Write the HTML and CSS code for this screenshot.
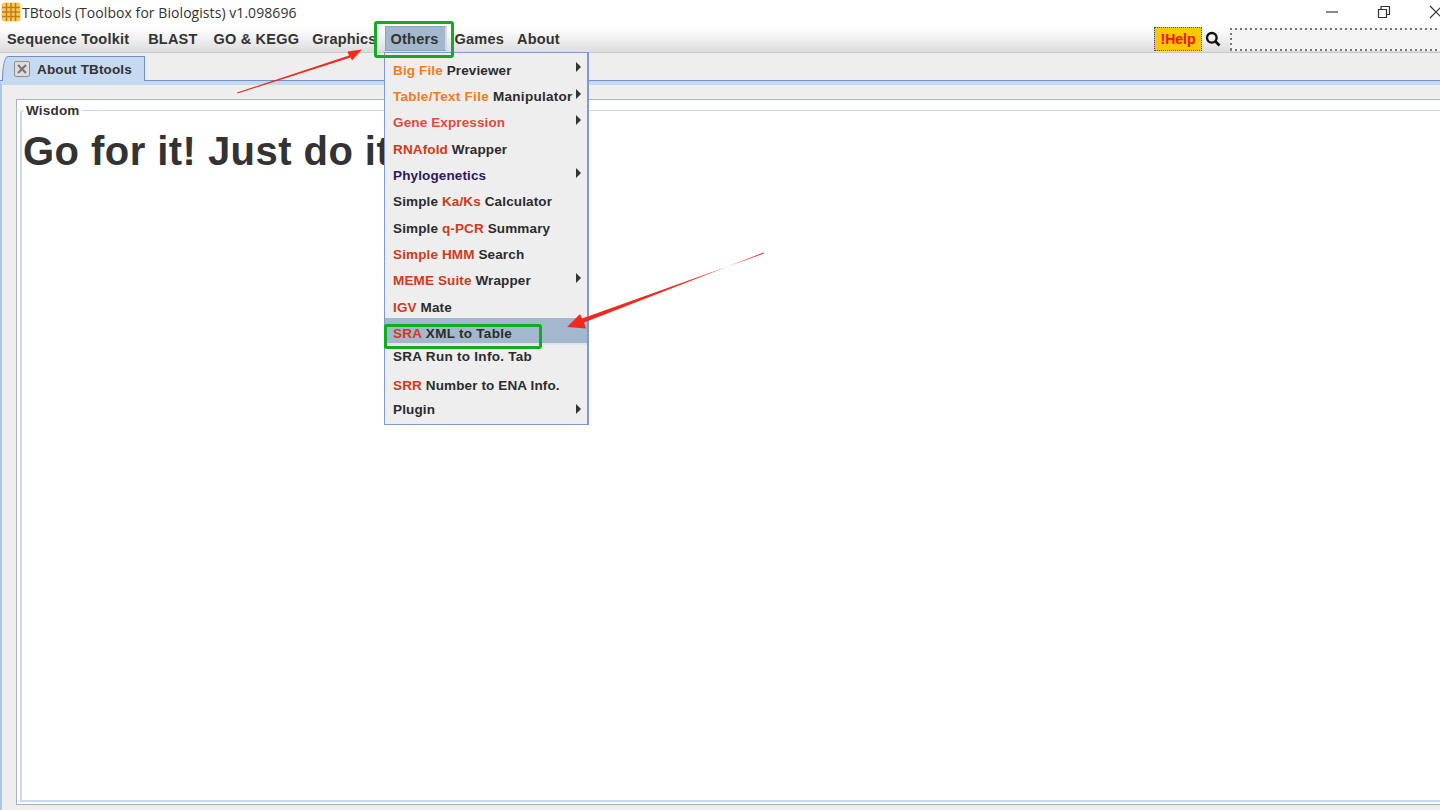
FILE: index.html
```html
<!DOCTYPE html>
<html lang="en">
<head>
<meta charset="utf-8">
<title>TBtools</title>
<link rel="stylesheet" href="styles.css">
</head>
<body>
<div class="app">
  <header class="titlebar">
    <svg class="appicon" viewBox="0 0 20 20" width="20" height="20">
      <rect x="0.500" y="0.500" width="19" height="19" rx="3" fill="#f9cc55"/>
      <path d="M5.500 1v18M10 1v18M14.500 1v18M1 5.500h18M1 10h18M1 14.500h18" stroke="#c47a1e" stroke-width="1.500"/>
    </svg>
    <span class="title">TBtools (Toolbox for Biologists) v1.098696</span>
    <div class="winctl">
      <svg width="14" height="14" viewBox="0 0 14 14"><path d="M1 7h12" stroke="#555" stroke-width="1.400"/></svg>
      <svg width="14" height="14" viewBox="0 0 14 14"><path d="M1.500 4.500h8v8h-8zM4 4.500V1.500h8.500v8H9.500" fill="none" stroke="#333" stroke-width="1.200"/></svg>
      <svg width="14" height="14" viewBox="0 0 14 14"><path d="M1 1l12 12M13 1L1 13" stroke="#333" stroke-width="1.200"/></svg>
    </div>
  </header>
  <nav class="menubar">
    <span class="mi mi-seq">Sequence Toolkit</span>
    <span class="mi">BLAST</span>
    <span class="mi">GO &amp; KEGG</span>
    <span class="mi mi-graphics">Graphics</span>
    <span class="mi mi-active">Others</span>
    <span class="mi">Games</span>
    <span class="mi mi-about">About</span>
    <div class="menu-right">
      <span class="help">!Help</span>
      <svg class="search" width="16" height="16" viewBox="0 0 16 16"><circle cx="6.800" cy="6.800" r="4.800" fill="none" stroke="#111" stroke-width="2.400"/><path d="M10.500 10.500l4 4" stroke="#111" stroke-width="2.600"/></svg>
      <div class="searchbox"></div>
    </div>
  </nav>
  <div class="tabstrip">
    <div class="tab">
      <span class="closebtn"><svg width="10" height="10" viewBox="0 0 10 10"><path d="M1 1l8 8M9 1L1 9" stroke="#777" stroke-width="2.200"/></svg></span>
      <span>About TBtools</span>
    </div>
  </div>
  <main class="pane">
    <section class="outer">
      <div class="group">
        <span class="legend">Wisdom</span>
        <h1 class="wisdom">Go for it! Just do it!</h1>
      </div>
    </section>
  </main>
</div>

<ul class="dropdown">
  <li class="row"><span><b class="orange">Big File</b> Previewer</span><i class="caret"></i></li>
  <li class="row row-wide"><span><b class="orange">Table/Text File</b> Manipulator</span><i class="caret"></i></li>
  <li class="row"><span><b class="rose">Gene Expression</b></span><i class="caret"></i></li>
  <li class="row"><span><b class="red">RNAfold</b> Wrapper</span></li>
  <li class="row"><span class="purple">Phylogenetics</span><i class="caret"></i></li>
  <li class="row"><span>Simple <b class="red">Ka/Ks</b> Calculator</span></li>
  <li class="row"><span>Simple <b class="red">q-PCR</b> Summary</span></li>
  <li class="row"><span><b class="red">Simple HMM</b> Search</span></li>
  <li class="row"><span><b class="red">MEME Suite</b> Wrapper</span><i class="caret"></i></li>
  <li class="row"><span><b class="red">IGV</b> Mate</span></li>
  <li class="row row-active row-wide"><span><b class="red">SRA</b> XML to Table</span></li>
  <li class="row row-short row-wide"><span>SRA Run to Info. Tab</span></li>
  <li class="row row-tall"><span><b class="red">SRR</b> Number to ENA Info.</span></li>
  <li class="row row-short row-plugin"><span>Plugin</span><i class="caret"></i></li>
</ul>

<div class="hl hl-others"></div>
<div class="hl hl-sra"></div>
<svg class="arrows" width="1440" height="810" viewBox="0 0 1440 810">
  <path d="M237 92.500L349 55.500L347.500 51.500L362 49.500L352 60.500L350.500 57.500L237.500 93.500z" fill="#f5281e"/>
  <path d="M763.500 252.500L584 322.500L586 328.500L567 327L580 314L582 318.500L764 253.500z" fill="#f5281e"/>
</svg>
</body>
</html>
```

FILE: styles.css
```css
* { box-sizing: border-box; }
html, body { margin: 0; padding: 0; height: 100%; overflow: hidden; background: #fff; }
body { font-family: "Liberation Sans", Arial, sans-serif; color: #2b2b2b; }

.app { width: 1440px; height: 810px; display: flex; flex-direction: column; background: #eeeeee; }

.titlebar { height: 26px; flex: none; display: flex; align-items: center; padding: 0 0 2px 1px; background: #fff; }
.appicon { flex: none; }
.title { margin-left: 1px; font-family: "Open Sans", "Liberation Sans", sans-serif; font-size: 14px; color: #333; letter-spacing: 0.06px; }
.winctl { margin-left: auto; display: flex; align-items: center; gap: 38px; margin-right: -3px; }

.menubar { height: 27px; flex: none; display: flex; align-items: flex-start; background: linear-gradient(#ffffff, #f4f4f4 40%, #dcdcdc); border-bottom: 1px solid #c9c9c9; }
.mi { font-size: 14.500px; font-weight: bold; color: #333; padding: 0 8px; height: 26px; line-height: 27px; letter-spacing: 0.2px; white-space: nowrap; }
.mi-seq { margin: 0 3px 0 -1px; }
.mi-graphics { margin-left: -3px; }
.mi-about { margin-left: -3px; }
.mi-active { background: #a3b8cc; border: 1px solid #8da3b8; border-right: 2px solid #d3dae2; height: 25px; line-height: 25px; padding: 0 0 0 5px; width: 62px; }
.menu-right { margin-left: auto; display: flex; align-items: center; height: 26px; }
.help { width: 48px; height: 24px; background: #fec700; border: 1px dotted #444; color: #f50f0f; font-size: 14px; font-weight: bold; line-height: 22px; text-align: center; }
.search { margin-left: 3px; }
.searchbox { margin-left: 9px; width: 210px; height: 23px; background-color: #f4f4f4;
  background-image: repeating-linear-gradient(90deg, #777 0 2px, transparent 2px 5px), repeating-linear-gradient(90deg, #777 0 2px, transparent 2px 5px), repeating-linear-gradient(#777 0 2px, transparent 2px 5px);
  background-size: 100% 2px, 100% 2px, 2px 100%; background-position: 0 0, 0 100%, 0 0; background-repeat: no-repeat; }

.tabstrip { height: 28px; flex: none; padding: 3px 0 0 2px; display: flex; border-bottom: 1px solid #6f8fcf; background: #eeeeee; }
.tab { width: 143px; height: 25px; background: #c5daf0; border: 1px solid #6f8fcf; border-bottom: 0; border-top-left-radius: 6px 22px; display: flex; align-items: center; padding-left: 11px; gap: 7px; font-size: 13.500px; font-weight: bold; color: #333; letter-spacing: 0.15px; }
.closebtn { width: 16px; height: 16px; flex: none; border: 1px solid #8f8f8f; background: #ddd; border-radius: 2px; display: flex; align-items: center; justify-content: center; }

.pane { flex: 1; min-height: 0; display: flex; padding: 14px 0 5px 14px; border-left: 2px solid #a9c6ee; border-top: 4px solid #c5daf0; background: #eeeeee; }
.outer { flex: 1; background: #fff; border: 1px solid #aab3bd; border-right: 0; padding: 10px 0 2px 3px; }
.group { height: 100%; position: relative; border: 1px solid #c5daf0; border-width: 1px 0 2px 2px; border-radius: 3px 0 0 0; padding: 8px 0 0 1px; }
.legend { position: absolute; left: 2px; top: -8px; background: #fff; padding: 0 2px; font-size: 13.500px; line-height: 15px; font-weight: bold; color: #333; letter-spacing: 0.2px; }
.wisdom { margin: 1px 0 0; font-size: 40px; line-height: 62px; font-weight: bold; color: #333; letter-spacing: 0.45px; white-space: nowrap; }

.dropdown { position: absolute; left: 384px; top: 52px; width: 205px; height: 373px; margin: 0; padding: 4px 0 0; list-style: none; background: #eeeeee; border: 1px solid #7d9ad2; border-right-width: 2px; }
.row { height: 26.350px; display: flex; align-items: center; justify-content: space-between; padding: 0 6px 0 8px; font-size: 13.500px; font-weight: bold; color: #2b2b2b; letter-spacing: 0.13px; white-space: nowrap; }
.row b { font-weight: bold; }
.row-wide { letter-spacing: 0.28px; }
.row-active { background: #a3b8cf; margin-top: -2.500px; height: 27px; padding-top: 6px; border-bottom: 2px solid #dde4ec; }
.row-short { height: 24px; }
.row-tall { height: 29px; padding-top: 4px; }
.orange { color: #f47c1c; }
.rose { color: #de4a42; }
.red { color: #cf3a20; }
.purple { color: #2c1a5c; }
.caret { width: 0; height: 0; flex: none; border-left: 5px solid #333; border-top: 5px solid transparent; border-bottom: 5px solid transparent; margin-top: -6px; }
.row-plugin .caret { margin-top: -1px; }

.hl { position: absolute; border: 3px solid #13ab22; border-radius: 3px; pointer-events: none; }
.hl-others { left: 374px; top: 21px; width: 80px; height: 37px; }
.hl-sra { left: 384px; top: 324px; width: 158px; height: 25px; }
.arrows { position: absolute; left: 0; top: 0; pointer-events: none; }
```
